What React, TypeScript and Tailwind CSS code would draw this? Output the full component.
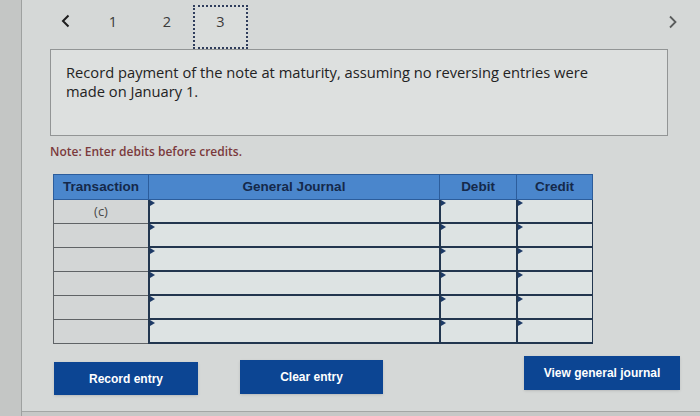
import React from 'react';

const rows = ['(c)', '', '', '', '', ''];

const Marker = () => (
  <span className="absolute left-0 top-0 h-0 w-0 border-y-[3px] border-l-[5px] border-y-transparent border-l-[#1d3a66]" />
);

const InputCell = ({ width, last }: { width: string; last?: boolean }) => (
  <div
    className={`relative h-[24px] ${width} border-b-2 border-l-2 border-[#22364f] bg-[#dde3e3] ${
      last ? 'border-r border-r-[#22364f]' : ''
    }`}
  >
    <Marker />
  </div>
);

export default function App() {
  return (
    <div
      className="flex h-[416px] w-[700px] overflow-hidden bg-[#c6c8c7]"
      style={{ fontFamily: '"Open Sans", "Liberation Sans", sans-serif' }}
    >
      {/* left strip */}
      <div className="h-full w-[22px] border-r border-[#9ea1a0] bg-[#c4c6c5]" />

      <div className="flex h-[412px] flex-1 flex-col border-b border-[#a3a6a5] bg-[#d5d8d7]">
        {/* pager */}
        <div className="flex h-[49px] items-end pr-[20px]">
          <div className="flex h-[44px] items-start pl-[36px] pt-[8px]">
            <svg width="16" height="16" viewBox="0 0 16 16" className="text-[#1e1e1e]">
              <path d="M10.5 2.5 L5 8 L10.5 13.5" fill="none" stroke="currentColor" strokeWidth="2" />
            </svg>
          </div>
          <div className="flex h-[44px] w-[78px] items-start justify-center pt-[6px] text-[14.5px] text-[#3a3a3a]">1</div>
          <div className="flex h-[44px] w-[30px] items-start justify-center pt-[6px] text-[14.5px] text-[#3a3a3a]">2</div>
          <div className="ml-[11px] flex h-[44px] w-[55px] items-start justify-center border-2 border-dotted border-[#2f3d5c] bg-[#dadddc] pt-[4px] text-[14.5px] text-[#3a3a3a]">
            3
          </div>
          <div className="flex-1" />
          <div className="flex h-[44px] items-start pt-[9px]">
            <svg width="14" height="16" viewBox="0 0 14 16" className="text-[#5a5c5c]">
              <path d="M4 2.5 L9.5 8 L4 13.5" fill="none" stroke="currentColor" strokeWidth="1.8" />
            </svg>
          </div>
        </div>

        {/* prompt */}
        <div className="ml-[28px] h-[87px] w-[618px] border border-[#929595] bg-[#dde0df] pl-[15px] pt-[13px]">
          <p className="text-[14.7px] leading-[19px] text-[#232323]">
            Record payment of the note at maturity, assuming no reversing entries were
            <br />
            made on January 1.
          </p>
        </div>

        <p className="ml-[28px] mt-[9px] text-[12px] font-semibold leading-[14px] text-[#7b3a3c]">
          Note: Enter debits before credits.
        </p>

        {/* journal table */}
        <div className="ml-[31px] mt-[15px] w-[540px]">
          <div
            className="flex h-[26px] border border-[#2c5d9c] bg-[#4a86cc] text-[13.5px] font-bold text-[#15294a]"
            style={{ fontFamily: '"Liberation Sans", Arial, sans-serif' }}
          >
            <div className="flex w-[95px] items-center justify-center border-r border-[#2c5d9c]">Transaction</div>
            <div className="flex w-[291px] items-center justify-center border-r border-[#2c5d9c]">General Journal</div>
            <div className="flex w-[77px] items-center justify-center border-r border-[#2c5d9c]">Debit</div>
            <div className="flex flex-1 items-center justify-center">Credit</div>
          </div>
          {rows.map((label, i) => (
            <div key={i} className="flex">
              <div className="flex h-[24px] w-[95px] items-center justify-center border-b border-l border-[#5f6366] bg-[#d3d6d6] text-[13px] text-[#4a4a4a]">
                {label}
              </div>
              <InputCell width="w-[291px]" />
              <InputCell width="w-[77px]" />
              <InputCell width="w-[77px]" last />
            </div>
          ))}
        </div>

        {/* actions */}
        <div
          className="flex items-start text-[12px] font-bold text-white"
          style={{ fontFamily: '"Liberation Sans", Arial, sans-serif' }}
        >
          <button className="ml-[32px] mt-[18px] h-[33px] w-[144px] bg-[#0c4593] shadow-sm">Record entry</button>
          <button className="ml-[42px] mt-[16px] h-[34px] w-[143px] bg-[#0c4593] shadow-sm">Clear entry</button>
          <button className="ml-[141px] mt-[12px] h-[34px] w-[156px] bg-[#0c4593] shadow-sm">
            View general journal
          </button>
        </div>
      </div>
    </div>
  );
}
